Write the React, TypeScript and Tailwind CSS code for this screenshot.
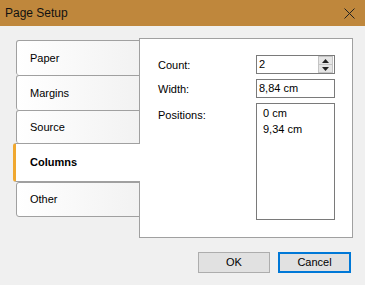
import { useState } from "react";

const tabs = ["Paper", "Margins", "Source", "Columns", "Other"];

const tabHeights: Record<string, string> = {
  Paper: "h-[35px]",
  Margins: "h-[35px]",
  Source: "h-[33px]",
  Columns: "h-[39px]",
  Other: "h-[35px]",
};

function Spinner() {
  return (
    <div className="flex flex-col w-[15px] h-[17px] mr-[1px]">
      <div className="flex-1 flex items-center justify-center bg-[#e5e5e5] border border-[#c4c4c4]">
        <svg width="7" height="4" viewBox="0 0 7 4">
          <path d="M0 4 L3.5 0 L7 4 Z" fill="#222" />
        </svg>
      </div>
      <div className="flex-1 flex items-center justify-center bg-[#e5e5e5] border border-t-0 border-[#c4c4c4]">
        <svg width="7" height="4" viewBox="0 0 7 4">
          <path d="M0 0 L3.5 4 L7 0 Z" fill="#222" />
        </svg>
      </div>
    </div>
  );
}

export default function App() {
  const [active, setActive] = useState("Columns");

  function renderTab(label: string, index: number) {
    const selected = label === active;
    const last = index === tabs.length - 1;
    if (selected) {
      return (
        <button
          key={label}
          onClick={() => setActive(label)}
          className={`${tabHeights[label]} w-[127px] -mr-[1px] flex items-center bg-white border-y border-[#a0a0a0] rounded-l-[3px] border-l-[3px] border-l-[#f0a830] pl-[14px] text-[11px] font-bold text-black text-left`}
        >
          {label}
        </button>
      );
    }
    return (
      <button
        key={label}
        onClick={() => setActive(label)}
        className={`${tabHeights[label]} ml-[3px] w-[124px] flex items-center bg-gradient-to-r from-white to-[#f2f2f2] border-t border-x border-[#a0a0a0] ${last ? "border-b" : ""} rounded-l-[3px] pl-[13px] text-[11px] text-black text-left`}
      >
        {label}
      </button>
    );
  }

  return (
    <div
      className="w-[365px] h-[285px] bg-[#f0f0f0] flex flex-col overflow-hidden"
      style={{ fontFamily: '"Liberation Sans", Arial, sans-serif' }}
    >
      <div className="h-[26px] bg-[#bf873c] flex items-center justify-between pl-[5px] pr-[10px] shrink-0">
        <span className="text-[12px] text-[#111]">Page Setup</span>
        <svg width="11" height="11" viewBox="0 0 11 11">
          <path d="M0.5 0.5 L10.5 10.5 M10.5 0.5 L0.5 10.5" stroke="#222" strokeWidth="1" />
        </svg>
      </div>

      <div className="flex ml-[13px] mt-[12px]">
        <div className="flex flex-col pt-[2px] relative z-10">
          {tabs.map(renderTab)}
        </div>
        <div className="w-[214px] h-[200px] -ml-[1px] border border-[#a0a0a0] bg-white pl-[18px] pt-[16px] text-[11px] text-black">
          <div className="grid grid-cols-[98px_79px] gap-y-[5px]">
            <div className="flex items-center h-[19px] pt-[2px]">Count:</div>
            <div className="h-[19px] border border-[#7a7a7a] flex items-center justify-between pl-[2px]">
              <span>2</span>
              <Spinner />
            </div>

            <div className="flex items-center h-[19px] pt-[2px]">Width:</div>
            <div className="h-[19px] border border-[#7a7a7a] flex items-center pl-[2px]">
              8,84 cm
            </div>

            <div className="pt-[4px]">Positions:</div>
            <div className="h-[117px] border border-[#7a7a7a] pl-[6px] pt-[1px] leading-[16px]">
              <div>0 cm</div>
              <div>9,34 cm</div>
            </div>
          </div>
        </div>
      </div>

      <div className="flex justify-end gap-[8px] pr-[14px] mt-[14px]">
        <button className="w-[72px] h-[21px] bg-[#e1e1e1] border border-[#adadad] text-[11px] text-black">
          OK
        </button>
        <button className="w-[73px] h-[21px] bg-[#e1e1e1] border-2 border-[#0078d7] text-[11px] text-black">
          Cancel
        </button>
      </div>
    </div>
  );
}
